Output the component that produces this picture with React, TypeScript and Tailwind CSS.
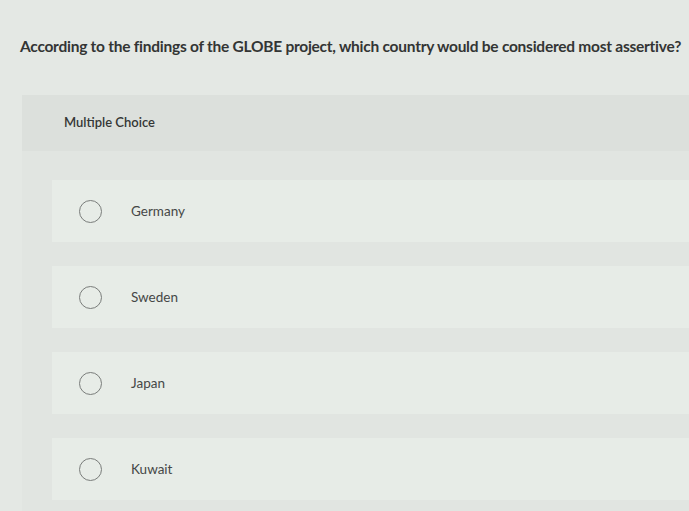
const options = ['Germany', 'Sweden', 'Japan', 'Kuwait']

const App = () => {
  return (
    <div
      className="min-h-[511px] w-[689px] overflow-hidden bg-[#e4e8e4] pt-[36px]"
      style={{ fontFamily: 'Lato, "Open Sans", Arial, sans-serif' }}
    >
      {/* Question */}
      <h1 className="whitespace-nowrap pl-[20px] text-[15.5px] leading-[20px] font-bold tracking-[-0.25px] text-[#333534]">
        According to the findings of the GLOBE project, which country would be considered most assertive?
      </h1>

      {/* Answer panel */}
      <div className="ml-[22px] mt-[39px] bg-[#e1e5e1] pb-[20px]">
        <div className="flex h-[56px] items-center bg-[#dce0dc] pl-[42px] text-[13px] font-semibold text-[#353736]">
          Multiple Choice
        </div>

        <div className="flex flex-col gap-[24px] pl-[30px] pt-[29px]">
          {options.map((opt) => (
            <div key={opt} className="flex h-[62px] items-center bg-[#e7ece7] pl-[27px]">
              <span className="h-[23px] w-[23px] rounded-full border-[1.5px] border-[#7a7d7b]" />
              <span className="ml-[29px] text-[13.5px] text-[#454746]">{opt}</span>
            </div>
          ))}
        </div>
      </div>
    </div>
  )
}

export default App
